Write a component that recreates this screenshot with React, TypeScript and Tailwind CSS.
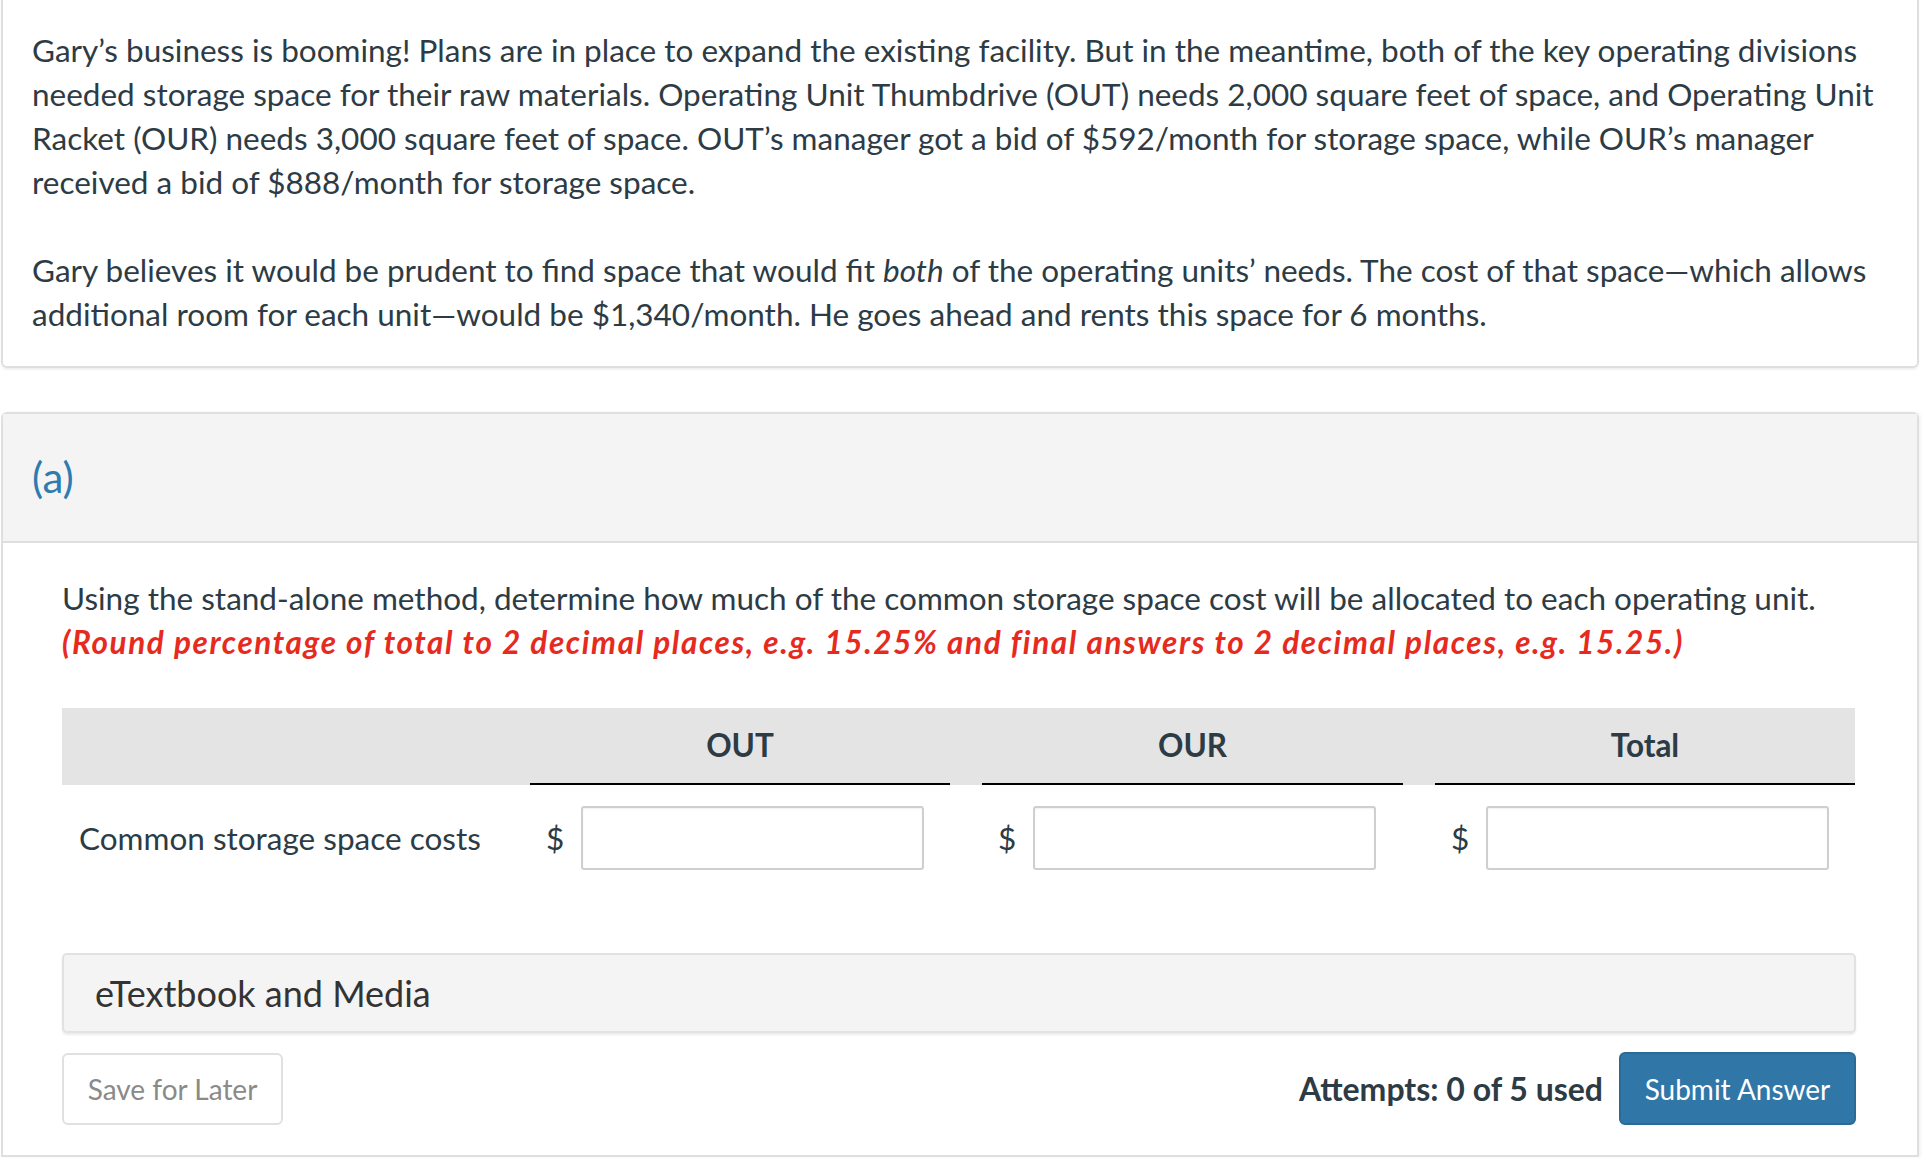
import React from "react";

const COLUMNS = ["OUT", "OUR", "Total"] as const;

function Paragraph({ children }: { children: React.ReactNode }) {
  return <p className="text-[31.5px] leading-[44px] text-[#2d3b45]">{children}</p>;
}

function MoneyCell() {
  return (
    <div className="flex items-center pl-[16px]">
      <span className="w-[35px] text-[31.5px] leading-[44px] text-[#2d3b45]">$</span>
      <input
        type="text"
        className="h-[64px] w-[343px] rounded-[3px] border-2 border-[#cfcfcf] bg-white px-3 text-[29px] shadow-[inset_0_1px_2px_rgba(0,0,0,0.06)] outline-none"
      />
    </div>
  );
}

export default function App() {
  return (
    <div className="min-h-screen w-full overflow-hidden bg-white pl-[1px] pr-[9px] font-['Lato','Open_Sans',sans-serif]">
      {/* problem statement */}
      <div className="-mt-[8px] rounded-[6px] border-2 border-[#dfdfdf] px-[29px] pb-[30px] pt-[34px] shadow-[0_2px_2px_rgba(0,0,0,0.06)]">
        <Paragraph>
          Gary’s business is booming! Plans are in place to expand the existing facility. But in the meantime, both of
          the key operating divisions needed storage space for their raw materials. Operating Unit Thumbdrive (OUT)
          needs 2,000 square feet of space, and Operating Unit Racket (OUR) needs 3,000 square feet of space. OUT’s
          manager got a bid of $592/month for storage space, while OUR’s manager received a bid of $888/month for
          storage space.
        </Paragraph>
        <div className="h-[44px]" />
        <Paragraph>
          Gary believes it would be prudent to find space that would fit <em>both</em> of the operating units’ needs.
          The cost of that space—which allows additional room for each unit—would be $1,340/month. He goes ahead and
          rents this space for 6 months.
        </Paragraph>
      </div>

      {/* part (a) */}
      <div className="mt-[44px] rounded-t-[6px] border-2 border-[#dfdfdf] shadow-[2px_0_3px_rgba(0,0,0,0.05)]">
        <div className="flex h-[129px] items-center border-b-2 border-[#dedede] bg-[#f4f4f4] px-[29px]">
          <span className="text-[42px] text-[#2e7bb0]">(a)</span>
        </div>

        <div className="px-[59px] pb-[30px] pt-[33px]">
          <p className="text-[31.5px] leading-[44px] text-[#2d3b45]">
            Using the stand-alone method, determine how much of the common storage space cost will be allocated to
            each operating unit.
          </p>
          <p className="text-[31.5px] font-bold italic leading-[44px] tracking-[1.6px] text-[#e62b1e]">
            (Round percentage of total to 2 decimal places, e.g. 15.25% and final answers to 2 decimal places, e.g.
            15.25.)
          </p>

          <div className="mt-[44px] w-[1793px]">
            <div className="grid grid-cols-[436px_420px_421px_420px] gap-x-[32px] bg-[#e4e4e4]">
              <div className="h-[77px]" />
              {COLUMNS.map((c) => (
                <div
                  key={c}
                  className="flex h-[77px] items-center justify-center border-b-2 border-black text-[31.5px] font-bold text-[#2d3b45]"
                >
                  {c}
                </div>
              ))}
            </div>
            <div className="grid grid-cols-[436px_420px_421px_420px] gap-x-[32px] pt-[21px]">
              <div className="flex items-center pl-[17px] text-[31.5px] leading-[44px] text-[#2d3b45]">
                Common storage space costs
              </div>
              {COLUMNS.map((c) => (
                <MoneyCell key={c} />
              ))}
            </div>
          </div>

          <div className="mt-[83px] flex h-[80px] w-[1794px] items-center rounded-[5px] border-2 border-[#e2e2e2] bg-[#f4f4f4] px-[31px] shadow-[0_2px_2px_rgba(0,0,0,0.08)]">
            <span className="text-[36px] text-[#333333]">eTextbook and Media</span>
          </div>

          <div className="mt-[19px] flex w-[1794px] items-center justify-between">
            <button className="h-[72px] w-[221px] rounded-[6px] border-2 border-[#e0e0e0] bg-white text-[28px] text-[#8a8a8a]">
              Save for Later
            </button>
            <div className="flex items-center gap-[16px]">
              <span className="text-[32px] font-bold text-[#2d3b45]">Attempts: 0 of 5 used</span>
              <button className="h-[73px] w-[237px] rounded-[6px] border-2 border-[#2a6a96] bg-[#3077a8] text-[28px] text-white">
                Submit Answer
              </button>
            </div>
          </div>
        </div>
      </div>
    </div>
  );
}
